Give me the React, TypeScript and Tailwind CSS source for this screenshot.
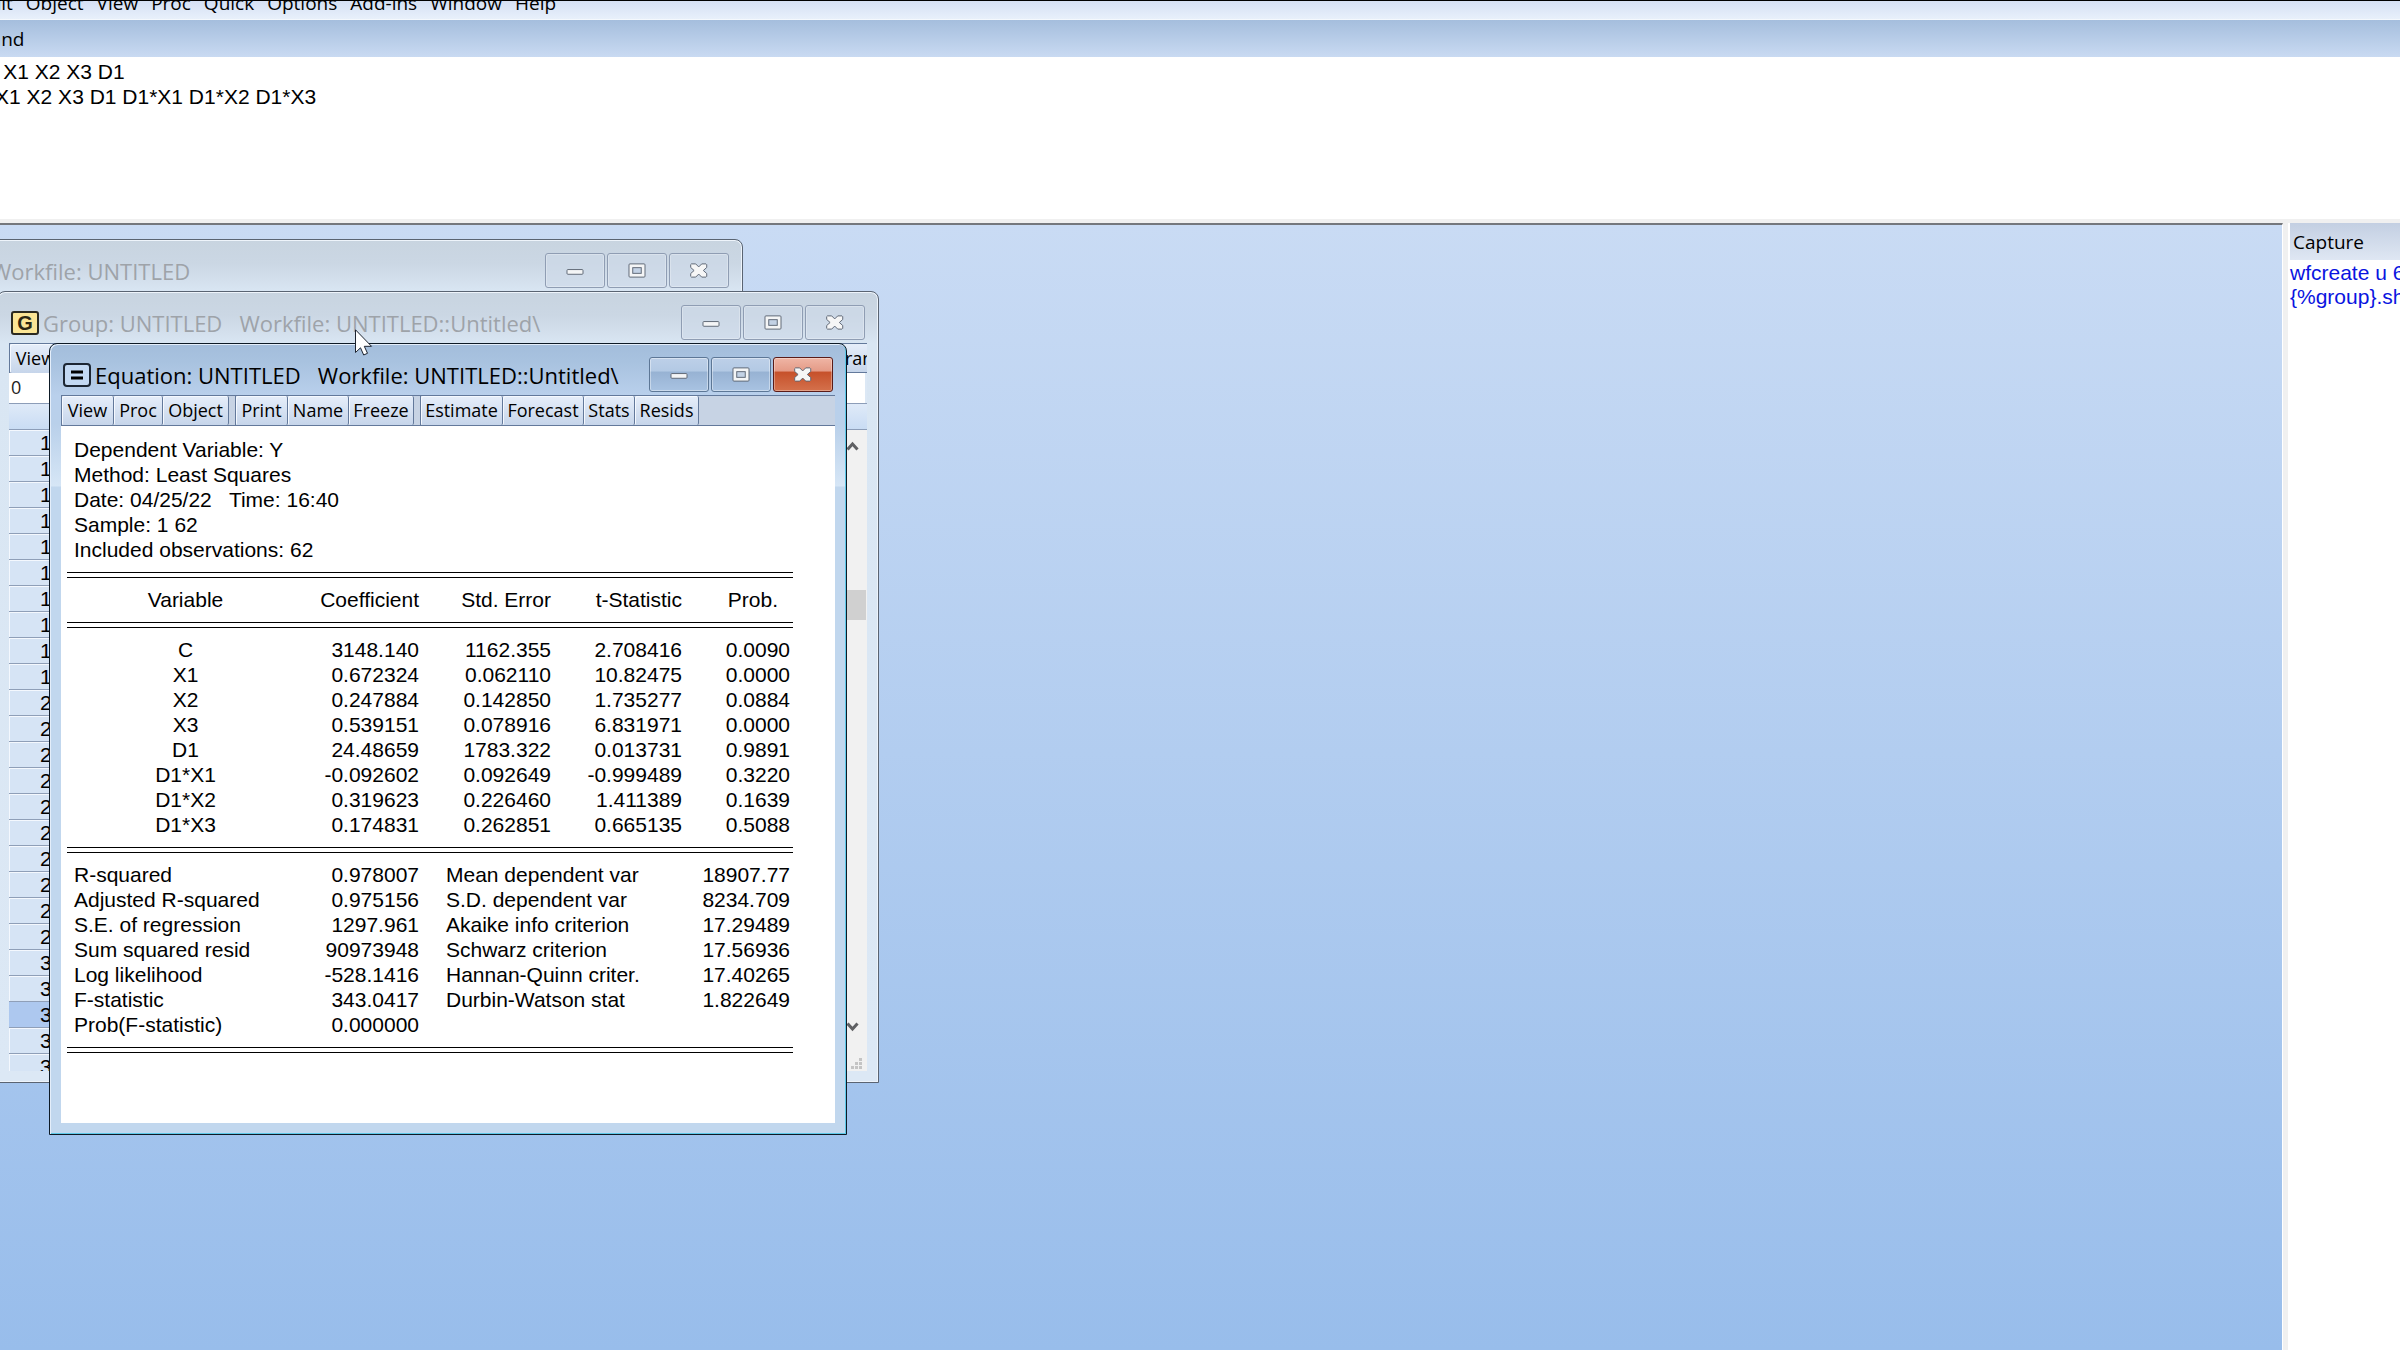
import type { ReactNode } from "react";
import clsx from "clsx";

interface CoefRow {
    name: string;
    coef: string;
    error: string;
    t: string;
    prob: string;
}

interface WindowFrameProps {
    title: string;
    icon: ReactNode;
    active?: boolean;
    className: string;
    children?: ReactNode;
}

const menus = ["File", "Edit", "Object", "View", "Proc", "Quick", "Options", "Add-ins", "Window", "Help"];

const commands = "Data Y X1 X2 X3 D1\nls Y C X1 X2 X3 D1 D1*X1 D1*X2 D1*X3";

const summary = [
    "Dependent Variable: Y",
    "Method: Least Squares",
    "Date: 04/25/22   Time: 16:40",
    "Sample: 1 62",
    "Included observations: 62",
];

const coefficients: CoefRow[] = [
    { name: "C", coef: "3148.140", error: "1162.355", t: "2.708416", prob: "0.0090" },
    { name: "X1", coef: "0.672324", error: "0.062110", t: "10.82475", prob: "0.0000" },
    { name: "X2", coef: "0.247884", error: "0.142850", t: "1.735277", prob: "0.0884" },
    { name: "X3", coef: "0.539151", error: "0.078916", t: "6.831971", prob: "0.0000" },
    { name: "D1", coef: "24.48659", error: "1783.322", t: "0.013731", prob: "0.9891" },
    { name: "D1*X1", coef: "-0.092602", error: "0.092649", t: "-0.999489", prob: "0.3220" },
    { name: "D1*X2", coef: "0.319623", error: "0.226460", t: "1.411389", prob: "0.1639" },
    { name: "D1*X3", coef: "0.174831", error: "0.262851", t: "0.665135", prob: "0.5088" },
];

const statistics = [
    ["R-squared", "0.978007", "Mean dependent var", "18907.77"],
    ["Adjusted R-squared", "0.975156", "S.D. dependent var", "8234.709"],
    ["S.E. of regression", "1297.961", "Akaike info criterion", "17.29489"],
    ["Sum squared resid", "90973948", "Schwarz criterion", "17.56936"],
    ["Log likelihood", "-528.1416", "Hannan-Quinn criter.", "17.40265"],
    ["F-statistic", "343.0417", "Durbin-Watson stat", "1.822649"],
    ["Prob(F-statistic)", "0.000000", "", ""],
];

// widths are per button, groups are split by a small gap
const equationTools = [
    [
        { label: "View", width: "w-[52px]" },
        { label: "Proc", width: "w-[49px]" },
        { label: "Object", width: "w-[66px]" },
    ],
    [
        { label: "Print", width: "w-[52px]" },
        { label: "Name", width: "w-[61px]" },
        { label: "Freeze", width: "w-[65px]" },
    ],
    [
        { label: "Estimate", width: "w-[82px]" },
        { label: "Forecast", width: "w-[81px]" },
        { label: "Stats", width: "w-[51px]" },
        { label: "Resids", width: "w-[64px]" },
    ],
];

const firstRow = 10;
const selectedRow = 32;
const groupRows = Array.from({ length: 25 }, (_, i) => firstRow + i);

function MinimizeGlyph() {
    return (
        <svg viewBox="0 0 60 35" className="h-full w-full">
            <rect x="21.5" y="16.5" width="17" height="5" rx="1" fill="#f4f5f6" stroke="#5b6472" />
        </svg>
    );
}

function MaximizeGlyph() {
    return (
        <svg viewBox="0 0 60 35" className="h-full w-full">
            <rect x="21.5" y="10.5" width="17" height="14" rx="1" fill="#f4f5f6" stroke="#5b6472" />
            <rect x="25.500" y="14.500" width="9" height="6" fill="#c3d2e5" stroke="#5b6472" />
        </svg>
    );
}

function CloseGlyph() {
    return (
        <svg viewBox="0 0 60 35" className="h-full w-full">
            <path
                d="M22 10.500h4.500l3.200 3.200 3.200-3.200h4.500l.8.800v3l-3.600 3.200 3.600 3.200v3l-.8.800h-4.500l-3.200-3.200-3.200 3.200h-4.500l-.8-.8v-3l3.600-3.200-3.600-3.200v-3z"
                fill="#f6f6f6"
                stroke="#5b6472"
                strokeLinejoin="round"
            />
        </svg>
    );
}

function CaptionButtons({ active }: { active?: boolean }) {
    const base = clsx(
        "h-[35px] w-[60px] rounded-[3px] border",
        active
            ? "border-[#5d7796] bg-[linear-gradient(#bdd0e8_0%,#b3c9e4_40%,#97b2d3_42%,#a9c3e2_100%)] shadow-[inset_0_0_0_1px_#ffffff66]"
            : "border-[#8f9db3] bg-[#cdd9e8]/60 shadow-[inset_0_0_0_1px_#ffffff44]"
    );
    const close = active
        ? "h-[35px] w-[60px] rounded-[3px] border border-[#5a1b18] bg-[linear-gradient(#efb5a5_0%,#e49a86_40%,#c6502a_42%,#d4714c_100%)] shadow-[inset_0_0_0_1px_#ffffff55]"
        : base;

    return (
        <div className="flex gap-[2px]">
            <button type="button" aria-label="Minimize" className={base}><MinimizeGlyph /></button>
            <button type="button" aria-label="Maximize" className={base}><MaximizeGlyph /></button>
            <button type="button" aria-label="Close" className={close}><CloseGlyph /></button>
        </div>
    );
}

function WindowFrame({ title, icon, active, className, children }: WindowFrameProps) {
    return (
        <section
            className={clsx(
                "absolute flex flex-col rounded-t-lg border px-[11px] pb-[11px]",
                active
                    ? "border-[#0d1a26] bg-[linear-gradient(#a3bddb_0px,#a9c3e0_20px,#b9d0ec_52px,#b9d0ea_80px,#d6e6f6_142px,#c1d7ee_143px)] shadow-[inset_1px_1px_0_#e4eefa,inset_-1px_-1px_0_#5cc8e8]"
                    : "border-[#5a6472] bg-[linear-gradient(#c8d4e0_0px,#cbd7e4_24px,#d9e6f3_52px,#dce8f5_100%)] shadow-[inset_0_0_0_1px_#eef4fb]",
                className
            )}
        >
            <header className="flex h-[51px] shrink-0 items-start justify-between px-[2px] pt-[13px]">
                <h2
                    className={clsx(
                        "flex h-9 items-center gap-1 whitespace-pre font-['Open_Sans',sans-serif] text-[22px]",
                        active ? "text-black" : "text-[#9ea3a9]"
                    )}
                >
                    {icon}
                    {title}
                </h2>
                <CaptionButtons active={active} />
            </header>
            {children}
        </section>
    );
}

function ToolButton({ label, width }: { label: string; width: string }) {
    return (
        <button
            type="button"
            className={clsx(
                "h-[29px] shrink-0 rounded-[2px] border-r border-[#63799b] bg-linear-to-b from-[#e6eefa] to-[#c6d5ea] text-center whitespace-nowrap shadow-[inset_1px_1px_0_#f5f9ff]",
                width
            )}
        >
            {label}
        </button>
    );
}

function GroupIcon() {
    return (
        <span className="flex h-6 w-7 items-center justify-center rounded-[3px] border-2 border-[#2b2a20] bg-[#fbe595] font-['Liberation_Sans',sans-serif] text-[20px] leading-5 font-bold text-[#2b2713]">
            G
        </span>
    );
}

function EquationIcon() {
    return (
        <svg viewBox="0 0 28 24" className="h-6 w-7">
            <rect x="1" y="1" width="26" height="22" rx="3" fill="#c3d9f3" stroke="#1c2633" strokeWidth="2" />
            <path d="M8 9h12M8 15h12" stroke="#000" strokeWidth="3" />
        </svg>
    );
}

function RuleRow() {
    return (
        <tr className="h-[25px]">
            <td colSpan={5} className="p-0">
                <div className="h-[6px] border-y border-black" />
            </td>
        </tr>
    );
}

function EquationOutput() {
    return (
        <div className="min-h-0 flex-1 bg-white pt-[11px] pl-[6px] font-['Liberation_Sans',Arial,sans-serif] text-[21px] leading-[25px] text-black">
            <div className="pl-[7px] whitespace-pre">
                {summary.map((line) => (
                    <p key={line}>{line}</p>
                ))}
            </div>
            <table className="w-[726px] table-fixed border-collapse text-right">
                <colgroup>
                    <col className="w-[237px]" />
                    <col className="w-[118px]" />
                    <col className="w-[132px]" />
                    <col className="w-[131px]" />
                    <col className="w-[108px]" />
                </colgroup>
                <tbody>
                    <RuleRow />
                    <tr>
                        <th className="p-0 text-center font-normal">Variable</th>
                        <th className="p-0 pr-[3px] font-normal">Coefficient</th>
                        <th className="p-0 pr-[3px] font-normal">Std. Error</th>
                        <th className="p-0 pr-[3px] font-normal">t-Statistic</th>
                        <th className="p-0 pr-[15px] font-normal">Prob.</th>
                    </tr>
                    <RuleRow />
                    {coefficients.map((row) => (
                        <tr key={row.name}>
                            <td className="p-0 text-center">{row.name}</td>
                            <td className="p-0 pr-[3px]">{row.coef}</td>
                            <td className="p-0 pr-[3px]">{row.error}</td>
                            <td className="p-0 pr-[3px]">{row.t}</td>
                            <td className="p-0 pr-[3px]">{row.prob}</td>
                        </tr>
                    ))}
                    <RuleRow />
                    {statistics.map(([label, value, label2, value2]) => (
                        <tr key={label}>
                            <td className="p-0 pl-[7px] text-left">{label}</td>
                            <td className="p-0 pr-[3px]">{value}</td>
                            <td colSpan={2} className="p-0 pl-6 text-left">{label2}</td>
                            <td className="p-0 pr-[3px]">{value2}</td>
                        </tr>
                    ))}
                    <RuleRow />
                </tbody>
            </table>
        </div>
    );
}

function GroupSheet() {
    return (
        <div className="flex min-h-0 flex-1 flex-col overflow-hidden font-['Open_Sans',sans-serif] text-[18px]">
            <div className="flex h-[30px] shrink-0 justify-between border-y border-l border-[#63799b] bg-[#c8d4e4]">
                <ToolButton label="View" width="w-[52px]" />
                <button
                    type="button"
                    className="w-[36px] overflow-hidden bg-linear-to-b from-[#e6eefa] to-[#c6d5ea] pl-1 text-left whitespace-nowrap"
                >
                    Transform
                </button>
            </div>
            <input
                aria-label="Cell value"
                defaultValue="0"
                className="h-[30px] w-full shrink-0 border-r-2 border-[#dce8f5] bg-white pb-[3px] pl-[2px] text-[#222] outline-none"
            />
            <div className="h-[27px] shrink-0 border-y border-[#8c9db8] bg-linear-to-b from-[#dfeaf8] to-[#c9dcf4]" />
            <div className="flex min-h-0 flex-1">
                <ol className="flex-1 overflow-hidden font-['Liberation_Sans',Arial,sans-serif] text-[21px] leading-[25px] text-black">
                    {groupRows.map((n) => (
                        <li
                            key={n}
                            className={clsx(
                                "h-[26px] border-b border-[#8f9fb8] pl-[31px]",
                                n === selectedRow ? "bg-[#adc8ef]" : "bg-[#d6e4f5] shadow-[inset_1px_1px_0_#f4f8fe]"
                            )}
                        >
                            {n}
                        </li>
                    ))}
                </ol>
                <div className="flex w-7 flex-col items-center bg-[#f1f1f1]">
                    <svg viewBox="0 0 28 30" className="h-[30px] w-7 shrink-0">
                        <path d="M8.500 19.500l5-5.500 5 5.500" fill="none" stroke="#5f6063" strokeWidth="3" />
                    </svg>
                    <div className="mt-[130px] h-[30px] w-[26px] shrink-0 bg-[#d0d0d0]" />
                    <div className="flex-1" />
                    <svg viewBox="0 0 28 60" className="h-[60px] w-7 shrink-0">
                        <path d="M8.500 12.500l5 5.500 5-5.500" fill="none" stroke="#5f6063" strokeWidth="3" />
                        <path d="M20 47h3v3h-3zM16 51h3v3h-3zM20 51h3v3h-3zM12 55h3v3h-3zM16 55h3v3h-3zM20 55h3v3h-3z" fill="#c4c4c4" />
                    </svg>
                </div>
            </div>
        </div>
    );
}

export default function App() {
    return (
        <div className="flex h-screen flex-col overflow-hidden border-t border-black bg-[#f0f0f0] text-black">
            <nav className="h-[19px] shrink-0 overflow-hidden border-b border-[#f4f8fd] bg-linear-to-b from-[#d5e0f4] to-[#e8f0fb] font-['Open_Sans',sans-serif] text-[19px] leading-7">
                <div className="-mt-3 -ml-16 flex gap-[13px]">
                    {menus.map((item) => (
                        <button key={item} type="button">{item}</button>
                    ))}
                </div>
            </nav>
            <label
                htmlFor="command"
                className="flex h-[37px] shrink-0 items-center bg-linear-to-b from-[#a5bedd] to-[#c9daf2] pt-[2px] font-['Open_Sans',sans-serif] text-[19px]"
            >
                <span className="-ml-[68px]">Command</span>
            </label>
            <div className="h-[162px] shrink-0 overflow-hidden bg-white">
                <textarea
                    id="command"
                    wrap="off"
                    spellCheck={false}
                    defaultValue={commands}
                    className="-ml-[66px] block h-full w-full resize-none overflow-hidden pt-[2px] font-['Liberation_Sans',Arial,sans-serif] text-[21px] leading-[25px] outline-none"
                />
            </div>
            <div className="mt-1 flex min-h-0 flex-1">
                <main className="relative min-w-0 flex-1 overflow-hidden border-t-2 border-r border-t-[#74777c] border-r-white bg-linear-to-b from-[#c9dbf4] to-[#98bdeb]">
                    <WindowFrame
                        title="Workfile: UNTITLED"
                        icon={<span className="h-6 w-7" />}
                        className="top-[14px] left-[-55px] h-[792px] w-[798px]"
                    />
                    <WindowFrame
                        title="Group: UNTITLED   Workfile: UNTITLED::Untitled\"
                        icon={<GroupIcon />}
                        className="top-[66px] left-[-3px] h-[792px] w-[882px]"
                    >
                        <GroupSheet />
                    </WindowFrame>
                    <WindowFrame
                        active
                        title="Equation: UNTITLED   Workfile: UNTITLED::Untitled\"
                        icon={<EquationIcon />}
                        className="top-[118px] left-[49px] h-[792px] w-[798px]"
                    >
                        <div className="flex h-[31px] shrink-0 gap-[6px] border-y border-[#63799b] bg-[#c7d3e4] font-['Open_Sans',sans-serif] text-[18px]">
                            {equationTools.map((group, i) => (
                                <div key={i} className="flex border-l border-[#63799b]">
                                    {group.map((tool) => (
                                        <ToolButton key={tool.label} label={tool.label} width={tool.width} />
                                    ))}
                                </div>
                            ))}
                        </div>
                        <EquationOutput />
                    </WindowFrame>
                    <svg viewBox="0 0 18 27" className="absolute top-[104px] left-[355px] h-[27px] w-[18px]">
                        <path
                            d="M.5.800v22.700l5-4.700 3.200 7.200 3.800-1.700-3.200-7h7.200z"
                            fill="#fff"
                            stroke="#1d2430"
                        />
                    </svg>
                </main>
                <aside className="ml-[5px] flex w-28 flex-col overflow-hidden bg-white">
                    <label
                        htmlFor="capture"
                        className="ml-[2px] flex h-[37px] shrink-0 items-center bg-linear-to-b from-[#c3cfe2] to-[#dfe7f3] pt-[2px] pl-[3px] font-['Open_Sans',sans-serif] text-[19px]"
                    >
                        Capture
                    </label>
                    <textarea
                        id="capture"
                        readOnly
                        wrap="off"
                        spellCheck={false}
                        defaultValue={"wfcreate u 62\n{%group}.sheet"}
                        className="w-full flex-1 resize-none overflow-hidden pt-px pl-[2px] font-['Liberation_Sans',Arial,sans-serif] text-[21px] leading-6 text-[#0a14e0] outline-none"
                    />
                </aside>
            </div>
        </div>
    );
}
